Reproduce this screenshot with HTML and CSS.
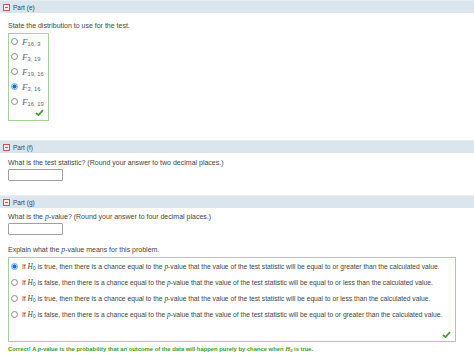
FILE: index.html
```html
<!DOCTYPE html>
<html lang="en">
<head>
  <meta charset="UTF-8" />
  <title>Parts e, f, g</title>
  <link rel="stylesheet" href="styles.css">
</head>
<body>

  <!-- PART E -->
  <div class="part">
    <div class="part-head"><span class="toggle"></span><span>Part (e)</span></div>
    <div class="part-body part-e">
      <p class="q">State the distribution to use for the test.</p>
      <div class="answer-box small">
        <label class="opt"><span class="radio"></span><span class="lbl"><i>F</i><sub>16, 3</sub></span></label>
        <label class="opt"><span class="radio"></span><span class="lbl"><i>F</i><sub>3, 19</sub></span></label>
        <label class="opt"><span class="radio"></span><span class="lbl"><i>F</i><sub>19, 16</sub></span></label>
        <label class="opt"><span class="radio on"></span><span class="lbl"><i>F</i><sub>3, 16</sub></span></label>
        <label class="opt"><span class="radio"></span><span class="lbl"><i>F</i><sub>16, 19</sub></span></label>
        <div class="check-row">
          <svg class="check" viewBox="0 0 10 8" width="9" height="7"><path d="M1 4.3 L3.8 7 L9 1.2" fill="none" stroke="#4a9a3c" stroke-width="2"/></svg>
        </div>
      </div>
    </div>
  </div>

  <!-- PART F -->
  <div class="part">
    <div class="part-head"><span class="toggle"></span><span>Part (f)</span></div>
    <div class="part-body part-f">
      <p class="q">What is the test statistic? (Round your answer to two decimal places.)</p>
      <input class="num" type="text">
    </div>
  </div>

  <!-- PART G -->
  <div class="part">
    <div class="part-head"><span class="toggle"></span><span>Part (g)</span></div>
    <div class="part-body part-g">
      <p class="q">What is the <i>p</i>-value? (Round your answer to four decimal places.)</p>
      <input class="num" type="text">
      <p class="q explain">Explain what the <i>p</i>-value means for this problem.</p>
      <div class="answer-box wide">
        <label class="opt"><span class="radio on"></span><span class="lbl">If <i>H</i><sub>0</sub> is true, then there is a chance equal to the <i>p</i>-value that the value of the test statistic will be equal to or greater than the calculated value.</span></label>
        <label class="opt"><span class="radio"></span><span class="lbl">If <i>H</i><sub>0</sub> is false, then there is a chance equal to the <i>p</i>-value that the value of the test statistic will be equal to or less than the calculated value.</span></label>
        <label class="opt"><span class="radio"></span><span class="lbl">If <i>H</i><sub>0</sub> is true, then there is a chance equal to the <i>p</i>-value that the value of the test statistic will be equal to or less than the calculated value.</span></label>
        <label class="opt"><span class="radio"></span><span class="lbl">If <i>H</i><sub>0</sub> is false, then there is a chance equal to the <i>p</i>-value that the value of the test statistic will be equal to or greater than the calculated value.</span></label>
        <div class="check-row">
          <svg class="check" viewBox="0 0 10 8" width="9" height="7"><path d="M1 4.3 L3.8 7 L9 1.2" fill="none" stroke="#4a9a3c" stroke-width="2"/></svg>
        </div>
      </div>
      <p class="correct">Correct! A <i>p</i>-value is the probability that an outcome of the data will happen purely by chance when <i>H</i><sub>0</sub> is true.</p>
    </div>
  </div>

</body>
</html>
```

FILE: styles.css
```css
* {
  margin: 0; padding: 0;
  box-sizing: border-box;
}

body {
  background: #fff;
  font-family: 'Liberation Sans', Arial, sans-serif;
  font-size: 7px;
  color: #444;
}

.part-head {
  height: 13px;
  display: flex;
  align-items: center;
  gap: 3px;
  padding-left: 3px;
  background: #dbe5ee;
  border-top: 1px solid #e8edf2;
  color: #444;
  font-size: 6.5px;
}

.toggle {
  width: 7px;
  height: 7px;
  border: 1px solid #c9545b;
  background: #fbeaea;
  position: relative;
}

.toggle::after {
  content: '';
  position: absolute;
  left: 1px; right: 1px; top: 2px;
  height: 1px;
  background: #c9545b;
}

.part-body {
  padding: 0 8px;
}

.q {
  line-height: 12px;
}

sub {
  font-size: 0.7em;
  vertical-align: -0.25em;
  line-height: 0;
}

i {
  font-family: 'Liberation Serif', serif;
  font-size: 1.1em;
}

.part-e { padding-top: 7px; padding-bottom: 19px; }
.part-f { padding-top: 4px; padding-bottom: 14px; }
.part-g { padding-top: 3px; }

.answer-box {
  border: 1px solid #a6d09a;
  margin-top: 1px;
}

.answer-box.small { width: 41px; }
.answer-box.wide { width: 448px; }

.opt {
  display: flex;
  align-items: center;
  white-space: nowrap;
}

.small .opt { height: 15px; padding-left: 2px; }
.wide .opt { height: 16px; padding-left: 2px; font-size: 6.72px; }

.radio {
  width: 7px;
  height: 7px;
  border-radius: 50%;
  border: 1px solid #8a8a8a;
  background: #fff;
  margin-right: 4px;
  flex: none;
}

.radio.on {
  border-color: #6aa4e8;
  background: radial-gradient(circle, #1a6fd6 0 1.8px, #cfe2fa 2.2px);
}

.small .lbl { font-size: 8.3px; color: #666; }

.check-row {
  display: flex;
  justify-content: flex-end;
  padding-right: 4px;
}

.small .check-row { height: 11px; align-items: flex-start; }
.wide .check-row { height: 19px; align-items: flex-end; padding-bottom: 3px; }

.num {
  display: block;
  width: 55px;
  height: 12px;
  border: 1px solid #a0a0a0;
  border-radius: 1px;
  background: #fff;
}

.explain { margin-top: 9px; }

.correct {
  color: #3d9a2f;
  font-weight: bold;
  font-size: 5.85px;
  line-height: 13px;
}
```
